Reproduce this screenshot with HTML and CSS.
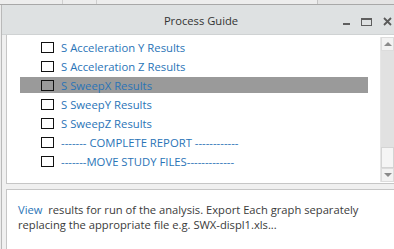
FILE: index.html
```html
<!DOCTYPE html>
<html>
<head>
<meta charset="utf-8">
<link rel="stylesheet" href="styles.css">
</head>
<body>
<div class="topstrip">
  <div class="seg seg1"></div>
  <div class="seg seg2"></div>
  <div class="seg seg3"></div>
  <div class="seg seg4"></div>
</div>
<div class="window">
  <div class="titlebar">
    <span class="title">Process Guide</span>
    <div class="controls">
      <span class="ctl min"></span>
      <span class="ctl max"></span>
      <svg class="ctl close" width="9" height="9" viewBox="0 0 9 9"><path d="M1 1 L8 8 M8 1 L1 8" stroke="#5a5a5a" stroke-width="1.8" fill="none"/></svg>
    </div>
  </div>
  <div class="list">
    <div class="items">
      <div class="row"><div class="inner"><span class="cb"></span><span class="lbl">S Acceleration Y Results</span></div></div>
      <div class="row"><div class="inner"><span class="cb"></span><span class="lbl">S Acceleration Z Results</span></div></div>
      <div class="row"><div class="inner sel"><span class="cb"></span><span class="lbl">S SweepX Results</span></div></div>
      <div class="row"><div class="inner"><span class="cb"></span><span class="lbl">S SweepY Results</span></div></div>
      <div class="row"><div class="inner"><span class="cb"></span><span class="lbl">S SweepZ Results</span></div></div>
      <div class="row"><div class="inner"><span class="cb"></span><span class="lbl">------- COMPLETE REPORT ------------</span></div></div>
      <div class="row"><div class="inner"><span class="cb"></span><span class="lbl">-------MOVE STUDY FILES-------------</span></div></div>
    </div>
    <div class="scrollbar">
      <div class="sbtn"><span class="arr up"></span></div>
      <div class="track"><div class="thumb"></div></div>
      <div class="sbtn"><span class="arr down"></span></div>
    </div>
  </div>
  <div class="gap"></div>
  <div class="desc">
    <p class="line"><span class="link">View</span>&nbsp; results for run of the analysis. Export Each graph separately</p>
    <p class="line">replacing the appropriate file e.g. SWX-displ1.xls...</p>
  </div>
</div>
</body>
</html>
```

FILE: styles.css
```css
* { box-sizing: border-box; }
html, body { margin: 0; padding: 0; }
body {
  width: 394px;
  height: 249px;
  overflow: hidden;
  background: #ececec;
  font-family: "Open Sans", "Noto Sans", sans-serif;
}
.topstrip {
  display: flex;
  height: 4px;
  border-bottom: 1px solid #a8a8a8;
  box-sizing: content-box;
}
.seg { height: 4px; background: #ededed; }
.seg1 { width: 63px; border-right: 1px solid #cfcfcf; }
.seg2 { width: 34px; border-right: 1px solid #cfcfcf; }
.seg3 { width: 221px; border-right: 1px solid #c4c4c4; }
.seg4 { flex: 1; background: #e4e4e4; }
.window {
  margin-left: 1px;
  border-left: 1px solid #b9b9b9;
  background: #f0f0f0;
  height: 244px;
  display: flex;
  flex-direction: column;
}
.titlebar {
  height: 30px;
  background: #dee1e2;
  border-bottom: 1px solid #cfd2d3;
  display: flex;
  align-items: center;
  justify-content: center;
  position: relative;
  flex: none;
}
.title {
  font-size: 11.2px;
  color: #333;
  margin-left: 6px;
  margin-top: 1px;
}
.controls {
  position: absolute;
  right: 2px;
  top: 12px;
  display: flex;
  align-items: center;
  gap: 11px;
}
.ctl { display: block; }
.min { width: 7px; height: 2px; background: #5e5e5e; margin-top: 4px; }
.max { width: 11px; height: 8px; border: 1px solid #5e5e5e; border-top-width: 2px; }
.close { width: 9px; height: 9px; }
.list {
  flex: none;
  height: 149px;
  margin-left: 4px;
  background: #fff;
  border-left: 1px solid #c6c6c6;
  border-bottom: 1px solid #c6c6c6;
  display: flex;
}
.items {
  flex: 1;
  padding-top: 3px;
}
.row {
  height: 19px;
  display: flex;
  align-items: center;
}
.inner {
  height: 16px;
  margin-left: 13px;
  margin-right: 12px;
  flex: 1;
  display: flex;
  align-items: center;
  padding-left: 21px;
}
.inner.sel { background: #9a9a9a; margin-top: -1px; }
.cb {
  width: 13px;
  height: 11px;
  border: 1.3px solid #111;
  background: transparent;
  flex: none;
}
.lbl {
  margin-left: 7px;
  font-size: 11.3px;
  color: #2a74b7;
  white-space: nowrap;
}
.scrollbar {
  width: 14px;
  margin-top: 2px;
  margin-bottom: 1px;
  background: #e1e1e1;
  display: flex;
  flex-direction: column;
  border-left: 1px solid #e6e6e6;
}
.sbtn {
  height: 14px;
  background: #f2f2f2;
  border: 1px solid #dcdcdc;
  display: flex;
  align-items: center;
  justify-content: center;
  flex: none;
}
.arr { width: 0; height: 0; border-left: 4px solid transparent; border-right: 4px solid transparent; }
.arr.up { border-bottom: 4px solid #8a8a8a; }
.arr.down { border-top: 4px solid #8a8a8a; }
.track {
  flex: 1;
  display: flex;
  flex-direction: column;
  justify-content: flex-end;
}
.thumb {
  height: 21px;
  background: #f5f5f5;
  border: 1px solid #d4d4d4;
}
.gap { height: 5px; flex: none; }
.desc {
  flex: 1;
  margin-left: 4px;
  background: #fff;
  border-top: 1px solid #c6c6c6;
  border-left: 1px solid #c6c6c6;
  padding: 12px 0 0 11px;
}
.line {
  margin: 0;
  font-size: 11.2px;
  line-height: 15px;
  color: #3a3a3a;
  white-space: nowrap;
}
.link { color: #2a74b7; }
```
